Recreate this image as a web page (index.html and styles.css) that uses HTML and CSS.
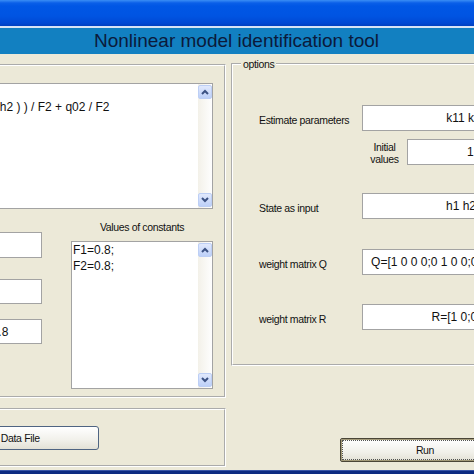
FILE: index.html
```html
<!DOCTYPE html>
<html lang="en">
<head>
    <meta charset="UTF-8">
    <meta name="viewport" content="width=device-width, initial-scale=1.0">
    <title>Nonlinear model identification tool</title>
    <link rel="stylesheet" href="styles.css">
</head>
<body>

<div class="window">
    <div class="titlebar"></div>
    <div class="figure-top"></div>
    <div class="banner">Nonlinear model identification tool</div>

    <div class="client">

        <!-- left side: model equations and constants -->
        <div class="left-col">
            <div class="frame model-frame">
                <div class="edit equations">
                    <div class="edit-text">
                        <div>dh1/dt = ( q01 - k11 * sqrt( h1 ) ) / F1</div>
                        <div>dh2/dt = ( k21 * sqrt( h1 ) - k22 * sqrt( h2 ) ) / F2 + q02 / F2</div>
                    </div>
                    <div class="vscroll">
                        <span class="sb-btn"><svg width="8" height="6" viewBox="0 0 8 6"><polyline points="1,5 4,2 7,5"/></svg></span>
                        <span class="sb-track"></span>
                        <span class="sb-btn"><svg width="8" height="6" viewBox="0 0 8 6"><polyline points="1,1 4,4 7,1"/></svg></span>
                    </div>
                </div>

                <div class="lower">
                    <div class="params">
                        <div class="edit single param-1"></div>
                        <div class="edit single param-2"></div>
                        <div class="edit single param-3">0.8</div>
                    </div>
                    <div class="consts">
                        <div class="small-text consts-label">Values of constants</div>
                        <div class="edit listbox">
                            <div class="list-text">
                                <div>F1=0.8;</div>
                                <div>F2=0.8;</div>
                            </div>
                            <div class="vscroll">
                                <span class="sb-btn"><svg width="8" height="6" viewBox="0 0 8 6"><polyline points="1,5 4,2 7,5"/></svg></span>
                                <span class="sb-track"></span>
                                <span class="sb-btn"><svg width="8" height="6" viewBox="0 0 8 6"><polyline points="1,1 4,4 7,1"/></svg></span>
                            </div>
                        </div>
                    </div>
                </div>
            </div>

            <div class="frame load-frame">
                <button class="xp-btn load-btn">Load Data File</button>
            </div>
        </div>

        <!-- right side: options -->
        <div class="right-col">
            <fieldset class="options">
                <legend>options</legend>
                <div class="opt-rows">
                    <div class="opt-row">
                        <span class="small-text opt-label">Estimate parameters</span>
                        <div class="edit single est-edit">k11 k21 k12 k22</div>
                    </div>
                    <div class="opt-row init-row">
                        <span class="opt-label"></span>
                        <span class="small-text init-label">Initial values</span>
                        <div class="edit single init-edit">1.25 1.2 1.2 1.25</div>
                    </div>
                    <div class="opt-row state-row">
                        <span class="small-text opt-label">State as input</span>
                        <div class="edit single">h1 h2</div>
                    </div>
                    <div class="opt-row q-row">
                        <span class="small-text opt-label">weight matrix Q</span>
                        <div class="edit single">Q=[1 0 0 0;0 1 0 0;0 0 1 0;0 0 0 1]</div>
                    </div>
                    <div class="opt-row r-row">
                        <span class="small-text opt-label">weight matrix R</span>
                        <div class="edit single">R=[1 0;0 1]</div>
                    </div>
                </div>
            </fieldset>
            <button class="xp-btn run-btn">Run</button>
        </div>

    </div>
    <div class="window-bottom"></div>
</div>

</body>
</html>
```

FILE: styles.css
```css
/* page */
body {
    margin: 0;
    overflow: hidden;
    background-color: #ece9d8;
    font-family: "Liberation Sans", Arial, sans-serif;
}

/* the figure window is wider than the shot, it starts left of the view */
.window {
    width: 901px;
    margin-left: -214px;
}

.titlebar {
    height: 26px;
    background: linear-gradient(#3a8ef5 0, #0a5fe8 3px, #0057e5 6px, #0054e2 16px, #0049d4 23px, #0040c0 26px);
}

.figure-top {
    height: 2px;
    background-color: #d8e4f6;
}

.banner {
    height: 26px;
    line-height: 26px;
    background-color: #1280c1;
    color: #0b1a3b;
    font-size: 19px;
    text-align: center;
}

.client {
    display: flex;
    gap: 5px;
    height: 416px;
    box-sizing: border-box;
    padding-top: 4px;
    background-color: #ece9d8;
}

.window-bottom {
    height: 4px;
    box-sizing: border-box;
    background-color: #0c2b82;
    border-top: 1px solid #3856a8;
}

.small-text {
    font-size: 10.5px;
    letter-spacing: -0.35px;
    line-height: 12px;
    color: #111;
}

/* etched panels */
.frame {
    border: 2px groove #fff;
    box-sizing: border-box;
}

.left-col {
    width: 440px;
    display: flex;
    flex-direction: column;
}

.model-frame {
    margin-top: 6px;
    height: 334px;
    padding: 17px 11px 7px 6px;
}

.load-frame {
    margin-top: 10px;
    height: 59px;
    padding-left: 4px;
    display: flex;
    align-items: center;
    justify-content: center;
}

/* edit boxes */
.edit {
    box-sizing: border-box;
    border: 1px solid #a3a3a3;
    background-color: #fff;
    font-size: 12px;
    color: #111;
}

.edit.single {
    display: flex;
    align-items: center;
    justify-content: center;
    height: 26px;
    white-space: nowrap;
    overflow: hidden;
}

.equations {
    display: flex;
    height: 126px;
}

.edit-text {
    flex: 1;
    padding: 1px 3px;
    line-height: 15px;
    white-space: nowrap;
    overflow: hidden;
}

.lower {
    display: flex;
    justify-content: space-between;
}

.params {
    width: 248px;
    display: flex;
    flex-direction: column;
    align-items: flex-end;
}

.params .edit {
    width: 84px;
}

.param-1 {
    margin-top: 23px;
}

.param-2 {
    margin-top: 21px;
    height: 25px !important;
}

.param-3 {
    margin-top: 15px;
    height: 25px !important;
}

.consts {
    width: 142px;
}

.consts-label {
    margin-top: 12px;
    text-align: center;
}

.listbox {
    display: flex;
    margin-top: 8px;
    height: 148px;
}

.list-text {
    flex: 1;
    padding: 0 1px;
    line-height: 16px;
}

/* xp scroll bar */
.vscroll {
    width: 14px;
    display: flex;
    flex-direction: column;
    padding: 1px 0;
    background: linear-gradient(to right, #f3f1e9, #fefefe);
}

.sb-btn {
    box-sizing: border-box;
    width: 14px;
    height: 14px;
    border: 1px solid #bdcff5;
    border-radius: 2px;
    background: linear-gradient(#e1e9fd, #bdd0f8);
    display: flex;
    align-items: center;
    justify-content: center;
}

.sb-btn svg polyline {
    fill: none;
    stroke: #3c5283;
    stroke-width: 2;
}

.sb-track {
    flex: 1;
}

/* buttons */
.xp-btn {
    box-sizing: border-box;
    height: 24px;
    font-family: inherit;
    font-size: 10.5px;
    letter-spacing: -0.35px;
    color: #111;
    background: linear-gradient(#ffffff, #f1f0ea 60%, #e3e1d6);
    padding: 0;
}

.load-btn {
    width: 182px;
    border: 1px solid #4f6482;
    border-radius: 3px;
}

.run-btn {
    width: 170px;
    margin-top: 72px;
    margin-left: 109px;
    border: 1px solid #4a4536;
    border-radius: 2px;
    box-shadow: inset 0 0 0 1px #a39a78;
    outline: 1px dotted #555;
    outline-offset: -3px;
}

/* options group */
.right-col {
    width: 449px;
    display: flex;
    flex-direction: column;
    align-items: flex-start;
}

.options {
    width: 449px;
    height: 308px;
    box-sizing: border-box;
    margin: 0;
    min-width: 0;
    padding: 35px 0 0 8px;
    border: 2px groove #fff;
}

.options legend {
    padding: 0 2px;
    font-size: 10.5px;
    letter-spacing: -0.35px;
    line-height: 12px;
    color: #111;
}

.opt-rows {
    padding-left: 18px;
}

.opt-row {
    display: flex;
    align-items: center;
}

.opt-label {
    width: 103px;
    flex: none;
    padding-top: 3px;
}

.opt-row .edit {
    width: 198px;
}

.opt-row .est-edit {
    width: 255px;
}

.init-row {
    margin-top: 8px;
}

.init-label {
    width: 45px;
    text-align: center;
    padding-top: 1px;
}

.opt-row .init-edit {
    width: 210px;
}

.state-row {
    margin-top: 28px;
}

.q-row {
    margin-top: 30px;
}

.r-row {
    margin-top: 29px;
}
```
